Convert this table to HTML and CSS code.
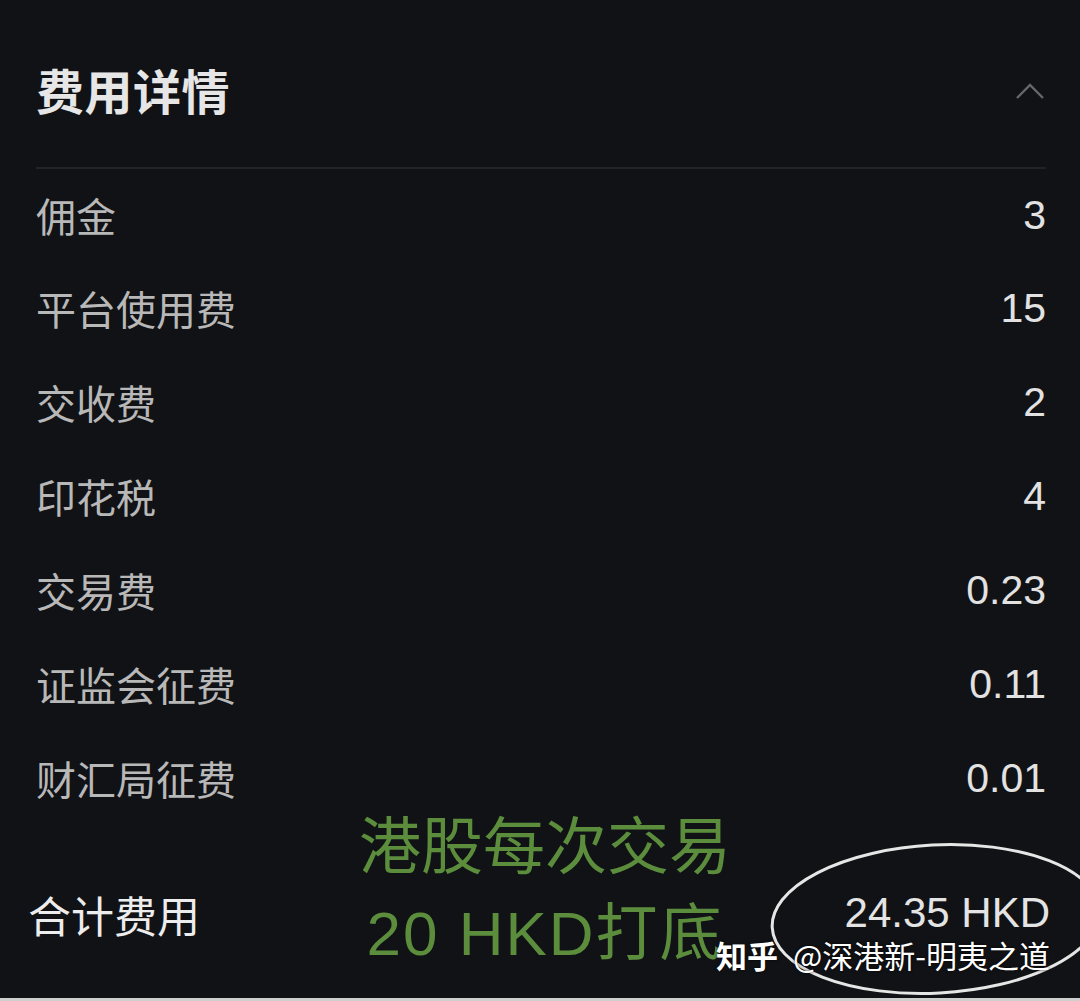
FILE: index.html
```html
<!DOCTYPE html>
<html lang="zh-CN">
<head>
    <meta charset="UTF-8">
    <meta name="viewport" content="width=device-width, initial-scale=1.0">
    <title>费用详情</title>
    <link rel="stylesheet" href="styles.css">
</head>
<body>
    <div class="panel">
        <div class="header">
            <h1>费用详情</h1>
            <svg class="chevron" width="30" height="18" viewBox="0 0 30 18">
                <polyline points="2,16 15,3 28,16" fill="none" stroke="#66676a" stroke-width="2.4"/>
            </svg>
        </div>

        <div class="rows">
            <div class="row"><span class="label">佣金</span><span class="value">3</span></div>
            <div class="row"><span class="label">平台使用费</span><span class="value">15</span></div>
            <div class="row"><span class="label">交收费</span><span class="value">2</span></div>
            <div class="row"><span class="label">印花税</span><span class="value">4</span></div>
            <div class="row"><span class="label">交易费</span><span class="value">0.23</span></div>
            <div class="row"><span class="label">证监会征费</span><span class="value">0.11</span></div>
            <div class="row"><span class="label">财汇局征费</span><span class="value">0.01</span></div>
        </div>

        <div class="total">
            <span class="total-label">合计费用</span>
            <span class="total-value">24.35 HKD</span>

            <div class="note">
                <div>港股每次交易</div>
                <div class="note-wide">20 HKD打底</div>
            </div>

            <svg class="circle" width="340" height="170" viewBox="0 0 340 170">
                <ellipse cx="168" cy="86" rx="164" ry="74" fill="none" stroke="#e6e6e6" stroke-width="3" transform="rotate(-3 168 86)"/>
            </svg>

            <div class="watermark"><b>知乎</b> @深港新-明夷之道</div>
        </div>
    </div>
</body>
</html>
```

FILE: styles.css
```css
body {
    margin: 0;
    padding: 0;
    background-color: #111215;
    font-family: "Liberation Sans", "Noto Sans CJK SC", sans-serif;
    overflow: hidden;
}

.panel {
    height: 998px;
    border-bottom: 3px solid #cfcfcf;
    overflow: hidden;
}

.header {
    height: 157px;
    padding: 10px 36px 0 36px;
    display: flex;
    align-items: center;
    justify-content: space-between;
}

.header h1 {
    margin: 0;
    font-family: "Noto Sans CJK SC", sans-serif;
    font-size: 48px;
    font-weight: 700;
    color: #e6e6e6;
    letter-spacing: 0.5px;
}

.chevron {
    margin-right: -1px;
    margin-top: 4px;
}

.rows {
    margin: 0 34px 0 36px;
    border-top: 2px solid #222327;
}

.row {
    height: 94px;
    display: flex;
    align-items: center;
    justify-content: space-between;
}

.row:first-child {
    height: 92px;
}

.label {
    font-family: "Noto Sans CJK SC", sans-serif;
    font-size: 40px;
    color: #b8b8b8;
}

.value {
    font-size: 41px;
    color: #e2e2e2;
}

.total {
    position: relative;
    height: 172px;
    padding: 0 30px 0 30px;
    display: flex;
    align-items: center;
    justify-content: space-between;
}

.total-label {
    font-family: "Noto Sans CJK SC", sans-serif;
    font-size: 43px;
    color: #ededed;
    margin-top: 6px;
    margin-left: -2px;
}

.total-value {
    font-size: 42px;
    line-height: 1;
    color: #e4e4e4;
    margin-top: 4px;
    position: relative;
    z-index: 1;
}

.note {
    position: absolute;
    left: 330px;
    top: -20px;
    width: 430px;
    text-align: center;
    font-family: "Liberation Sans", "Noto Sans CJK SC", sans-serif;
    font-size: 62px;
    line-height: 86px;
    color: #5b8d3d;
}

.note-wide {
    letter-spacing: 2px;
}

.circle {
    position: absolute;
    left: 768px;
    top: 8px;
}

.watermark {
    position: absolute;
    left: 716px;
    top: 114px;
    font-family: "Noto Sans CJK SC", sans-serif;
    font-size: 31px;
    line-height: 1;
    color: #ffffff;
    white-space: nowrap;
    text-shadow: 0 0 3px rgba(0, 0, 0, 0.8);
    z-index: 2;
}

.watermark b {
    font-weight: 700;
    margin-right: 8px;
}
```
